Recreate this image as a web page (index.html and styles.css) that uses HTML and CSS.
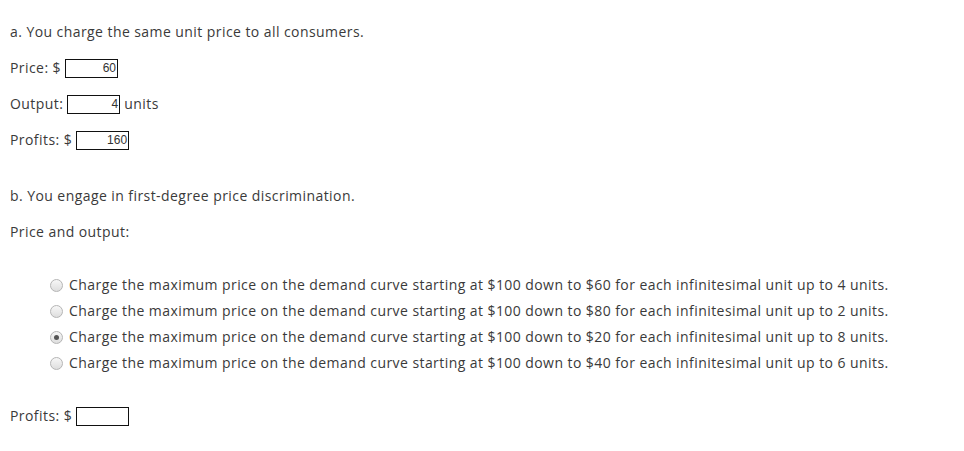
FILE: index.html
```html
<!DOCTYPE html>
<html lang="en">
<head>
    <meta charset="UTF-8">
    <title>Price discrimination</title>
    <link rel="stylesheet" href="styles.css">
</head>
<body>
    <div class="question">
        <p class="line">a. You charge the same unit price to all consumers.</p>
        <p class="line">Price: $ <span class="answer">60</span></p>
        <p class="line">Output: <span class="answer">4</span> units</p>
        <p class="line">Profits: $ <span class="answer">160</span></p>

        <p class="line part">b. You engage in first-degree price discrimination.</p>
        <p class="line">Price and output:</p>

        <ul class="choices">
            <li><span class="radio"></span>Charge the maximum price on the demand curve starting at $100 down to $60 for each infinitesimal unit up to 4 units.</li>
            <li><span class="radio"></span>Charge the maximum price on the demand curve starting at $100 down to $80 for each infinitesimal unit up to 2 units.</li>
            <li><span class="radio checked"></span>Charge the maximum price on the demand curve starting at $100 down to $20 for each infinitesimal unit up to 8 units.</li>
            <li><span class="radio"></span>Charge the maximum price on the demand curve starting at $100 down to $40 for each infinitesimal unit up to 6 units.</li>
        </ul>

        <p class="line">Profits: $ <span class="answer"></span></p>
    </div>
</body>
</html>
```

FILE: styles.css
```css
* {
    margin: 0;
    padding: 0;
    box-sizing: border-box;
}

body {
    font-family: "Open Sans", "Liberation Sans", sans-serif;
    font-size: 14px;
    letter-spacing: 0.43px;
    color: #3a3a3a;
    background: #fff;
}

.question {
    padding: 22px 10px 0 10px;
}

.line {
    line-height: 20px;
    height: 20px;
    margin-bottom: 16px;
    display: flex;
    align-items: center;
    gap: 4px;
}

.line.part {
    margin-top: 36px;
}

.answer {
    display: inline-block;
    width: 53px;
    height: 19px;
    border: 1px solid #111;
    font-family: "Liberation Sans", Arial, sans-serif;
    font-size: 12px;
    letter-spacing: 0;
    line-height: 17px;
    text-align: right;
    padding-right: 1px;
    color: #333;
}

.choices {
    list-style: none;
    margin: 33px 0 33px 0;
    padding-left: 40px;
}

.choices li {
    display: flex;
    align-items: center;
    height: 20px;
    line-height: 20px;
    margin-bottom: 6px;
}

.choices li:last-child {
    margin-bottom: 0;
}

.radio {
    position: relative;
    width: 13px;
    height: 13px;
    border-radius: 50%;
    border: 1px solid #b5b5b5;
    background: linear-gradient(#f7f7f7, #dedede);
    margin-right: 6px;
    flex-shrink: 0;
}

.radio.checked::after {
    content: "";
    position: absolute;
    left: 3px;
    top: 3px;
    width: 5px;
    height: 5px;
    border-radius: 50%;
    background: #555;
}
```
